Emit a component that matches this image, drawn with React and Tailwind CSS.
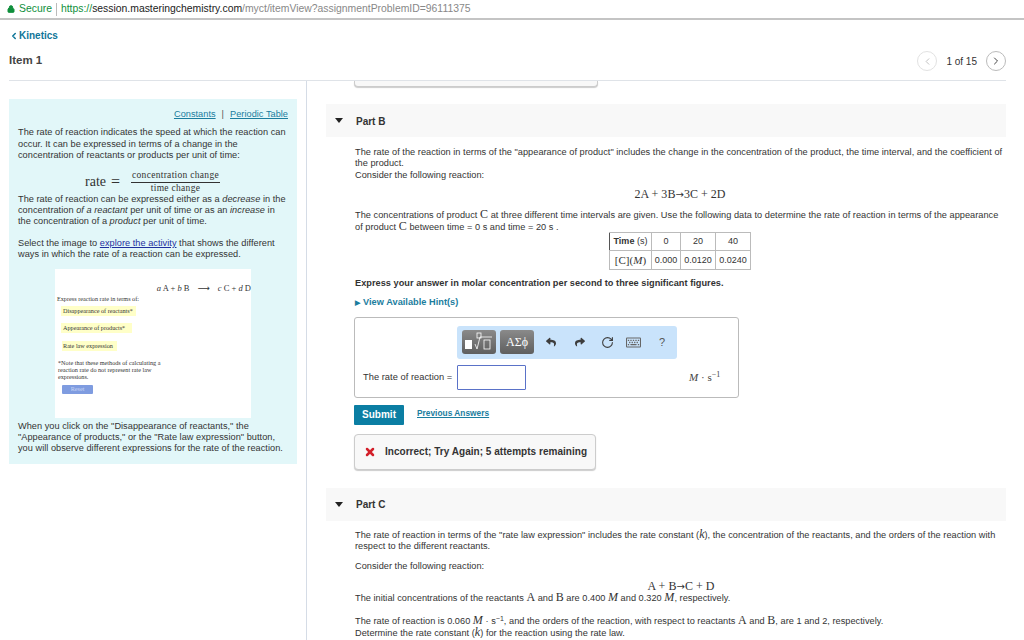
import React from 'react';
import { Lock, ChevronLeft, ChevronRight, RotateCw, X } from 'lucide-react';
import { FaReply, FaShare, FaRegKeyboard } from 'react-icons/fa';

const serif = 'font-["Liberation_Serif",serif]';

const M = ({ children }) => <span className={`${serif} text-[12px] leading-[0]`}>{children}</span>;
const I = ({ children }) => <span className={`${serif} italic text-[12px] leading-[0]`}>{children}</span>;
const Arrow = () => <span className='font-["DejaVu_Sans",sans-serif] text-[10px]'>→</span>;

const PartHead = ({ name }) => (
  <div className="flex items-center h-[33px] bg-[#f8f8f8]">
    <span className="ml-[9px] w-0 h-0 border-x-[4px] border-x-transparent border-t-[5px] border-t-[#222]" />
    <span className="ml-[13px] mt-[1px] text-[10px] font-bold text-[#333]">{name}</span>
  </div>
);

const Btn = ({ children, w }) => (
  <div className={`${w} h-[24px] rounded-[3px] bg-gradient-to-b from-[#8a8a8a] to-[#5f5f5f] flex items-center justify-center text-white`}>
    {children}
  </div>
);

const Activity = () => (
  <div className={`${serif} w-[196px] h-[149px] mx-auto mt-[8px] bg-white text-[#333] text-[6.2px] leading-[6.8px] tracking-normal pl-[2px] flex flex-col`}>
    <div className="text-right text-[8.5px] mt-[15px] leading-[9px]"><i>a</i> A + <i>b</i> B <span className='font-["DejaVu_Sans",sans-serif] mx-[6px]'>⟶</span> <i>c</i> C + <i>d</i> D</div>
    <div className="mt-[3px]">Express reaction rate in terms of:</div>
    <div className="mt-[4px] ml-[4px] w-[75px] h-[10px] bg-[#ffffc8] pl-[2px] flex items-center">Disappearance of reactants*</div>
    <div className="mt-[7px] ml-[4px] w-[71px] h-[10px] bg-[#ffffc8] pl-[2px] flex items-center">Appearance of products*</div>
    <div className="mt-[8px] ml-[5px] w-[55px] h-[10px] bg-[#ffffc8] pl-[1px] flex items-center">Rate law expression</div>
    <div className="mt-[9px] ml-[1px] w-[105px]">*Note that these methods of calculating a reaction rate do not represent rate law expressions.</div>
    <div className="mt-[4px] ml-[5px] w-[31px] h-[9px] rounded-[1px] bg-[#7f9ce0] text-[#c9d6f5] flex items-center justify-center">Reset</div>
  </div>
);

const LeftPanel = () => (
  <aside className="w-[307px] shrink-0 border-r border-[#d5dce6] pl-[9px] pt-[18px]">
    <div className="w-[288px] h-[365px] bg-[#e2f7f9] px-[9px] pt-[10px] text-[9.2px] tracking-[0.03px] leading-[11.4px] text-[#333]">
      <div className="text-right text-[#1b7d9e]">
        <span className="underline">Constants</span>
        <span className="text-[#555] mx-[6px]">|</span>
        <span className="underline">Periodic Table</span>
      </div>
      <p className="mt-[7px]">
        The rate of reaction indicates the speed at which the reaction can occur. It can be expressed in terms of a change in the<br />concentration of reactants or products per unit of time:
      </p>
      <div className={`${serif} flex items-center mt-[8px] ml-[67px] text-[#333] tracking-normal`}>
        <span className="text-[14px]">rate</span>
        <span className="ml-[5px] text-[16px] leading-[14px]">=</span>
        <span className="ml-[11px] flex flex-col items-center text-[9.5px] leading-[11px] tracking-[0.3px]">
          <span className="border-b border-[#333] pb-[1px] px-[1px]">concentration change</span>
          <span>time change</span>
        </span>
      </div>
      <p>
        The rate of reaction can be expressed either as a <i>decrease</i> in the concentration <i>of a reactant</i> per unit of time or as an <i>increase</i> in the concentration of a <i>product</i> per unit of time.
      </p>
      <p className="mt-[10px]">
        Select the image to <span className="underline text-[#1f2f9e]">explore the activity</span> that shows the different ways in which the rate of a reaction can be expressed.
      </p>
      <Activity />
      <p className="mt-[3px]">
        When you click on the "Disappearance of reactants," the "Appearance of products," or the "Rate law expression" button, you will observe different expressions for the rate of the reaction.
      </p>
    </div>
  </aside>
);

const AnswerBox = () => (
  <div className="mt-[8px] -ml-[1px] w-[385px] h-[81px] border border-[#bbb] rounded-[3px] pt-[8px] pl-[8px]">
    <div className="ml-[94px] w-[220px] h-[33px] bg-[#c9e3fb] rounded-[3px] flex items-center pl-[5px] text-[#3d3d3d]">
      <Btn w="w-[34px]">
        <svg width="30" height="20" viewBox="0 0 30 20" fill="none" stroke="white" strokeWidth="0.8">
          <rect x="1" y="8" width="7" height="9" fill="white" stroke="none" />
          <rect x="13" y="1" width="4" height="5" />
          <path d="M11 12l2 5 3-12h12" />
          <rect x="20" y="8" width="6" height="9" />
        </svg>
      </Btn>
      <div className="ml-[4px]">
        <Btn w="w-[34px]"><span className={`${serif} text-[12px]`}>ΑΣϕ</span></Btn>
      </div>
      <FaReply size={10} className="ml-[12px]" />
      <FaShare size={10} className="ml-[19px]" />
      <RotateCw size={13} strokeWidth={2} className="ml-[16px]" />
      <FaRegKeyboard size={15} className="ml-[12px] text-[#666]" />
      <span className="ml-[18px] text-[11px] text-[#555]">?</span>
    </div>
    <div className="flex items-center mt-[6px] h-[25px] text-[9.3px] text-[#333]">
      <span className="w-[94px]">The rate of reaction =</span>
      <div className="w-[69px] h-[25px] bg-white border border-[#5a72c8] rounded-[1px]" />
      <span className={`${serif} ml-[163px] text-[11px] text-[#444]`}><i>M</i> · s<sup className="text-[8px]">−1</sup></span>
    </div>
  </div>
);

const PartB = () => (
  <section>
    <PartHead name="Part B" />
    <div className="pl-[29px] text-[9.2px] tracking-[0.03px] leading-[11.4px] text-[#333]">
      <p className="mt-[10px]">
        The rate of the reaction in terms of the "appearance of product" includes the change in the concentration of the product, the time interval, and the coefficient of the product.
        <br />Consider the following reaction:
      </p>
      <div className={`${serif} mt-[6px] text-center text-[12px] leading-[14px] pr-[1px]`}>2A + 3B<Arrow />3C + 2D</div>
      <p className="mt-[8px]">
        The concentrations of product <M>C</M> at three different time intervals are given. Use the following data to determine the rate of reaction in terms of the appearance<br />of product <M>C</M> between time = 0 s and time = 20 s .
      </p>
      <table className="-mt-[1px] ml-[254px] border-collapse border border-[#555] text-[9px] leading-[11px] text-center">
        <tbody>
          <tr className="h-[18px]">
            <td className="border border-[#bbb] border-l-[#555] w-[42px] font-bold"><b>Time</b> <span className="font-normal">(s)</span></td>
            <td className="border border-[#bbb] w-[29px]">0</td>
            <td className="border border-[#bbb] w-[35px]">20</td>
            <td className="border border-[#bbb] w-[35px]">40</td>
          </tr>
          <tr className="h-[19px] border-t border-[#555]">
            <td className={`${serif} border border-[#bbb] text-[11px]`}>[C](<i>M</i>)</td>
            <td className="border border-[#bbb]">0.000</td>
            <td className="border border-[#bbb]">0.0120</td>
            <td className="border border-[#bbb]">0.0240</td>
          </tr>
        </tbody>
      </table>
      <p className="mt-[8px] font-bold">Express your answer in molar concentration per second to three significant figures.</p>
      <p className="mt-[8px] font-bold text-[#1b7d9e]"><span className="text-[7px] mr-[3px]">▶</span>View Available Hint(s)</p>
      <AnswerBox />
      <div className="mt-[7px] -ml-[1px] flex items-center">
        <div className="w-[50px] h-[20px] bg-[#0b7ea3] rounded-[1px] text-white text-[10px] font-bold flex items-center justify-center">Submit</div>
        <span className="ml-[13px] mb-[2px] text-[#1b7d9e] text-[8.3px] font-bold underline">Previous Answers</span>
      </div>
      <div className="mt-[9px] -ml-[1px] w-[242px] h-[36px] bg-[#f8f8f8] border border-[#ccc] rounded-[4px] shadow-[0_1px_1px_#ccc] flex items-center pl-[9px]">
        <X size={12} strokeWidth={5} className="text-[#d3202a]" />
        <span className="ml-[9px] text-[10px] font-bold text-[#333]">Incorrect; Try Again; 5 attempts remaining</span>
      </div>
    </div>
  </section>
);

const PartC = () => (
  <section className="mt-[18px]">
    <PartHead name="Part C" />
    <div className="pl-[29px] text-[9.2px] tracking-[0.03px] leading-[11.4px] text-[#333]">
      <p className="mt-[9px]">
        The rate of reaction in terms of the "rate law expression" includes the rate constant (<I>k</I>), the concentration of the reactants, and the orders of the reaction with respect to the different reactants.
      </p>
      <p className="mt-[8px]">Consider the following reaction:</p>
      <div className={`${serif} mt-[8px] text-center text-[12px] leading-[12px] pl-[1px]`}>A + B<Arrow />C + D</div>
      <p>
        The initial concentrations of the reactants <M>A</M> and <M>B</M> are 0.400 <I>M</I> and 0.320 <I>M</I>, respectively.
      </p>
      <p className="mt-[12px]">
        The rate of reaction is 0.060 <I>M</I> · s<sup className="text-[7px] leading-[0]">−1</sup>, and the orders of the reaction, with respect to reactants <M>A</M> and <M>B</M>, are 1 and 2, respectively.
        <br />Determine the rate constant (<I>k</I>) for the reaction using the rate law.
      </p>
    </div>
  </section>
);

export default function App() {
  return (
    <div className='w-[1024px] h-[640px] overflow-hidden bg-white font-["Liberation_Sans",sans-serif] flex flex-col'>
      <div className="h-[20px] shrink-0 border-b-2 border-[#c4c4c4] flex items-center pl-[7px] text-[10.4px]">
        <Lock size={8} strokeWidth={3} className="text-[#0f8f3c] fill-[#0f8f3c]" />
        <span className="ml-[4px] text-[#0f8f3c]">Secure</span>
        <span className="mx-[4px] h-[13px] w-px bg-[#bbb]" />
        <span className="text-[#0f8f3c]">https://</span>
        <span className="text-[#222]">session.masteringchemistry.com</span>
        <span className="text-[#888]">/myct/itemView?assignmentProblemID=96111375</span>
      </div>

      <div className="h-[61px] shrink-0 ml-[9px] w-[997px] border-b border-[#dfe3e8] flex flex-col">
        <div className="mt-[8px] flex items-center text-[10px] font-bold text-[#0f7699]">
          <ChevronLeft size={10} strokeWidth={3.5} />
          <span>Kinetics</span>
        </div>
        <div className="mt-[8px] flex items-center">
          <span className="text-[11.5px] font-bold text-[#444]">Item 1</span>
          <div className="ml-auto flex items-center text-[10px] text-[#333]">
            <span className="w-[20px] h-[20px] rounded-full border border-[#e2e2e2] flex items-center justify-center text-[#bbb]"><ChevronLeft size={11} /></span>
            <span className="mx-[9px]">1 of 15</span>
            <span className="w-[20px] h-[20px] rounded-full border border-[#bbb] flex items-center justify-center text-[#444]"><ChevronRight size={12} /></span>
          </div>
        </div>
      </div>

      <div className="flex flex-1 min-h-0">
        <LeftPanel />
        <main className="flex-1 pl-[19px] pr-[18px] min-w-0">
          <div className="ml-[28px] w-[244px] h-[6px] bg-[#f8f8f8] border-x border-b border-[#ccc] rounded-b-[4px] shadow-[0_1px_1px_#ccc]" />
          <div className="mt-[17px]">
            <PartB />
            <PartC />
          </div>
        </main>
      </div>
    </div>
  );
}
